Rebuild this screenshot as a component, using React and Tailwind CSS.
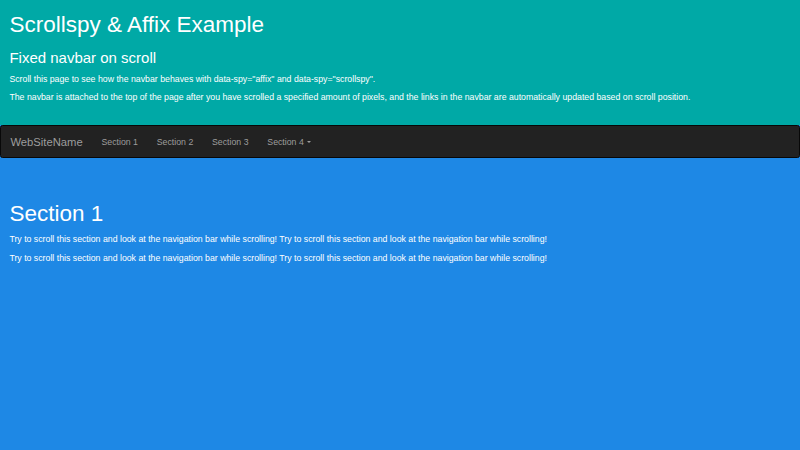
export default function App() {
  const p1 = "Try to scroll this section and look at the navigation bar while scrolling! Try to scroll this section and look at the navigation bar while scrolling!";
  return (
    <div className="w-[800px] h-[450px] overflow-hidden bg-[#1e88e5] font-['Liberation_Sans',Arial,sans-serif] text-white text-[8.75px] leading-[12.5px]">
      <div className="h-[125px] bg-[#00a9a6] px-[9.4px] flow-root">
        <h1 className="mt-[12.5px] mb-[6.25px] text-[22.5px] leading-[24.75px] font-normal">Scrollspy &amp; Affix Example</h1>
        <h3 className="mt-[12.5px] mb-[6.25px] text-[15px] leading-[16.5px] font-normal">Fixed navbar on scroll</h3>
        <p className="mb-[6.25px]">Scroll this page to see how the navbar behaves with data-spy="affix" and data-spy="scrollspy".</p>
        <p className="mb-[6.25px]">The navbar is attached to the top of the page after you have scrolled a specified amount of pixels, and the links in the navbar are automatically updated based on scroll position.</p>
      </div>
      <nav className="h-[33px] bg-[#222] border border-[#080808] rounded-[2.5px] flex items-center px-[9.4px] pt-[1px]">
        <span className="text-[#9d9d9d] text-[11.25px] leading-[12.5px] pr-[9.4px]">WebSiteName</span>
        <ul className="flex text-[#9d9d9d]">
          <li className="px-[9.4px]">Section 1</li>
          <li className="px-[9.4px]">Section 2</li>
          <li className="px-[9.4px]">Section 3</li>
          <li className="px-[9.4px] flex items-center">
            Section 4
            <span className="ml-[3px] inline-block w-0 h-0 border-t-[2.5px] border-t-[#9d9d9d] border-x-[2.5px] border-x-transparent"></span>
          </li>
        </ul>
      </nav>
      <div className="px-[9.4px] pt-[44px] flow-root">
        <h1 className="mb-[6.25px] text-[22.5px] leading-[24.75px] font-normal">Section 1</h1>
        <p className="mb-[6.25px]">{p1}</p>
        <p className="mb-[6.25px]">{p1}</p>
      </div>
    </div>
  );
}
